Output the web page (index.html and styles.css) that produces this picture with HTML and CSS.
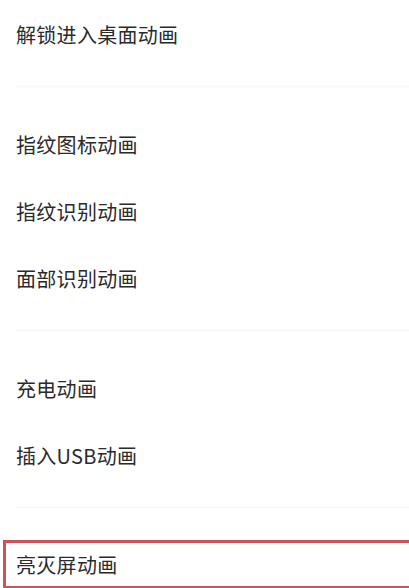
FILE: index.html
```html
<!DOCTYPE html>
<html lang="zh-CN">
<head>
<meta charset="utf-8">
<title>动画设置</title>
<link rel="stylesheet" href="styles.css">
</head>
<body>
<div class="page">
  <div class="group first">
    <div class="row">解锁进入桌面动画</div>
  </div>
  <div class="divider"></div>
  <div class="group">
    <div class="row">指纹图标动画</div>
    <div class="row">指纹识别动画</div>
    <div class="row">面部识别动画</div>
  </div>
  <div class="divider"></div>
  <div class="group">
    <div class="row">充电动画</div>
    <div class="row">插入USB动画</div>
  </div>
  <div class="divider"></div>
  <div class="group last">
    <div class="row highlighted">亮灭屏动画</div>
  </div>
</div>
</body>
</html>
```
FILE: styles.css
```css
html, body {
  margin: 0;
  padding: 0;
  background: #ffffff;
}
body {
  width: 409px;
  height: 588px;
  overflow: hidden;
  font-family: "Noto Sans CJK SC", "Noto Sans", sans-serif;
  color: #2a2a2a;
}
.page {
  display: flex;
  flex-direction: column;
}
.group {
  display: flex;
  flex-direction: column;
}
.group.first {
  padding-top: 1px;
}
.row {
  height: 67px;
  display: flex;
  align-items: center;
  padding-left: 16px;
  font-size: 20px;
  line-height: 1;
  letter-spacing: 0.3px;
}
.divider {
  margin: 18px 0 24px 16px;
  height: 1px;
  background: #f7f7f7;
}
.group.last {
  margin-top: 8px;
}
.highlighted {
  box-sizing: border-box;
  height: 49px;
  margin-left: 3px;
  width: 420px;
  padding-left: 10px;
  padding-bottom: 0;
  border: 3px solid #cc525b;
}
```
